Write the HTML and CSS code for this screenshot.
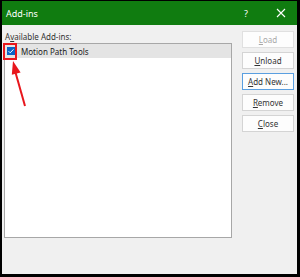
FILE: index.html
```html
<!DOCTYPE html>
<html>
<head>
<meta charset="utf-8">
<link rel="stylesheet" href="styles.css">
</head>
<body>
<div class="dialog">
  <div class="titlebar">
    <span class="title">Add-ins</span>
    <span class="help">?</span>
    <span class="close-x">
      <svg width="10" height="10" viewBox="0 0 10 10"><path d="M1 1L9 9M9 1L1 9" stroke="#fff" stroke-width="1.1" fill="none"/></svg>
    </span>
  </div>
  <div class="content">
    <div class="left">
      <div class="label">A<u>v</u>ailable Add-ins:</div>
      <div class="list">
        <div class="row">
          <span class="cb">
            <svg width="8" height="8" viewBox="0 0 8 8"><path d="M1.6 4.2L3.2 5.8L6.5 2.3" stroke="#fff" stroke-width="1" fill="none"/></svg>
          </span>
          <span class="item">Motion Path Tools</span>
        </div>
      </div>
    </div>
    <div class="buttons">
      <div class="btn disabled"><u>L</u>oad</div>
      <div class="btn"><u>U</u>nload</div>
      <div class="btn focus"><u>A</u>dd New...</div>
      <div class="btn"><u>R</u>emove</div>
      <div class="btn"><u>C</u>lose</div>
    </div>
  </div>
</div>
<div class="annot-box"></div>
<svg class="annot-arrow" width="40" height="60" viewBox="0 0 40 60">
  <path d="M15.5 12.5 L25 46" stroke="#e8161c" stroke-width="2" fill="none"/>
  <path d="M13 1 L20.6 12.5 L11.8 14.7 Z" fill="#e8161c"/>
</svg>
</body>
</html>
```
FILE: styles.css
```css
html, body {
  margin: 0;
  padding: 0;
}
body {
  width: 300px;
  height: 277px;
  background: #000;
  position: relative;
  overflow: hidden;
  font-family: "Noto Sans", "Open Sans", sans-serif;
}
.dialog {
  margin: 1px 3px 3px 2px;
  width: 295px;
  height: 273px;
  background: #f0f0f0;
  display: flex;
  flex-direction: column;
}
.titlebar {
  height: 24px;
  background: #107c10;
  color: #fff;
  display: flex;
  align-items: center;
  padding-left: 4px;
}
.title {
  font-size: 9px;
  flex: 1;
}
.help {
  font-size: 9px;
  width: 12px;
  text-align: center;
  margin-right: 24px;
}
.close-x {
  display: flex;
  align-items: center;
  margin-right: 11px;
}
.content {
  display: flex;
  padding-top: 6px;
  gap: 10px;
}
.left {
  margin-left: 2px;
  width: 228px;
  display: flex;
  flex-direction: column;
}
.label {
  font-size: 8px;
  color: #333;
  height: 12px;
  line-height: 12px;
  padding-left: 1px;
}
.list {
  height: 193px;
  background: #fff;
  border: 1px solid #a7a7a7;
}
.row {
  height: 14px;
  background: #e4e4e4;
  display: flex;
  align-items: center;
  padding-left: 2px;
}
.cb {
  width: 8px;
  height: 8px;
  background: #0a64c8;
  display: flex;
}
.item {
  font-size: 8px;
  color: #222;
  margin-left: 6px;
}
.buttons {
  width: 52px;
  display: flex;
  flex-direction: column;
  gap: 4px;
}
.btn {
  height: 15px;
  border: 1px solid #d4d4d4;
  background: #fdfdfd;
  font-size: 8px;
  color: #333;
  display: flex;
  align-items: center;
  justify-content: center;
}
.btn.disabled {
  color: #a8a8a8;
  border-color: #e0e0e0;
}
.btn.focus {
  border-color: #5a9fe0;
}
.annot-box {
  position: absolute;
  left: 3px;
  top: 43px;
  width: 10px;
  height: 13px;
  border: 2px solid #e8161c;
}
.annot-arrow {
  position: absolute;
  left: 0;
  top: 60px;
}
```
